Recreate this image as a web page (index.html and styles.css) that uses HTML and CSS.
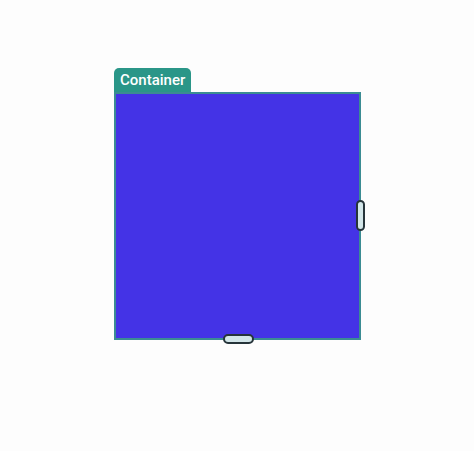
FILE: index.html
```html
<!DOCTYPE html>
<html>
<head>
<meta charset="utf-8">
<link rel="stylesheet" href="styles.css">
</head>
<body>
<div class="stage">
  <div class="frame">
    <div class="tab">Container</div>
    <div class="box">
      <div class="handle handle-right"></div>
      <div class="handle handle-bottom"></div>
    </div>
  </div>
</div>
</body>
</html>
```
FILE: styles.css
```css
html, body {
  margin: 0;
  padding: 0;
  background: #fdfdfd;
}
.stage {
  width: 474px;
  height: 451px;
  padding: 68px 0 0 114px;
  box-sizing: border-box;
}
.frame {
  display: flex;
  flex-direction: column;
  align-items: flex-start;
}
.tab {
  background: #2a9688;
  color: #ffffff;
  font-family: Roboto, sans-serif;
  font-weight: 500;
  font-size: 15px;
  line-height: 24px;
  height: 24px;
  padding: 0 6px 0 6px;
  border-radius: 5px 5px 0 0;
}
.box {
  position: relative;
  width: 247px;
  height: 248px;
  box-sizing: border-box;
  background: #4433e6;
  border: 2px solid #3b8c93;
}
.handle {
  position: absolute;
  background: #d3e6e9;
  border: 2px solid #26343a;
  box-sizing: border-box;
  border-radius: 5px;
}
.handle-right {
  width: 9px;
  height: 31px;
  right: -6px;
  top: 106px;
}
.handle-bottom {
  width: 31px;
  height: 10px;
  bottom: -6px;
  left: 107px;
}
```
